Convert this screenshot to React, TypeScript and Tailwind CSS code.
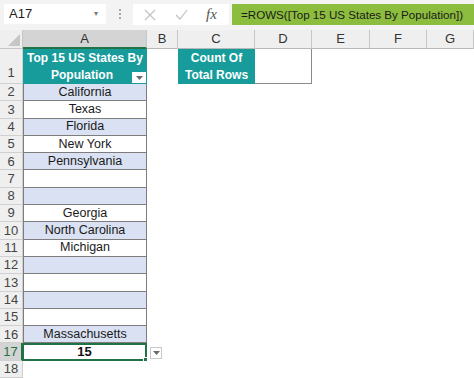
const cols = ["A", "B", "C", "D", "E", "F", "G"]
const widths = ["w-[124px]", "w-[31px]", "w-[77px]", "w-[57px]", "w-[58px]", "w-[57px]", "w-[47px]"]

const states = [
  "California",
  "Texas",
  "Florida",
  "New York",
  "Pennsylvania",
  "",
  "",
  "Georgia",
  "North Carolina",
  "Michigan",
  "",
  "",
  "",
  "",
  "Massachusetts",
]

function Caret() {
  return (
    <svg width="7" height="4" viewBox="0 0 7 4" className="block">
      <path d="M0 0 L7 0 L3.5 4 Z" fill="#6b6b6b" />
    </svg>
  )
}

function FormulaBar() {
  return (
    <div className="flex h-[30px] items-start bg-[#f3f3f3] pt-[4px]">
      {/* name box */}
      <div className="ml-[4px] flex h-[20px] w-[102px] items-center justify-between bg-white pl-[5px] pr-[8px] text-[13px] text-[#222]">
        <span>A17</span>
        <span className="text-[8px] text-[#777]">▾</span>
      </div>
      <div className="flex w-[27px] flex-col items-center justify-center gap-[2px] pt-[5px]">
        <span className="h-[2px] w-[2px] bg-[#aaa]" />
        <span className="h-[2px] w-[2px] bg-[#aaa]" />
        <span className="h-[2px] w-[2px] bg-[#aaa]" />
      </div>
      <div className="flex h-[21px] w-[96px] items-center bg-white">
        <svg width="12" height="12" viewBox="0 0 12 12" className="ml-[11px]">
          <path d="M1 1 L11 11 M11 1 L1 11" stroke="#c2c2c2" strokeWidth="1.2" />
        </svg>
        <svg width="13" height="11" viewBox="0 0 13 11" className="ml-[19px]">
          <path d="M1 6 L5 10 L12 1" stroke="#c2c2c2" strokeWidth="1.2" fill="none" />
        </svg>
        <span className="ml-[18px] font-['Liberation_Serif'] text-[15px] italic text-[#555]">fx</span>
      </div>
      <div className="ml-[3px] flex h-[21px] min-w-0 flex-1 items-center overflow-hidden whitespace-nowrap bg-[#8cbd3e] pl-[9px] text-[11.6px] text-[#1a1a1a]">
        =ROWS([Top 15 US States By Population])
      </div>
    </div>
  )
}

function HeaderRow() {
  return (
    <div className="flex h-[19px] bg-[#efefef] text-[13px] text-[#333]">
      <div className="relative w-[23px] border-r border-b border-[#c6c6c6]">
        <svg width="12" height="12" viewBox="0 0 12 12" className="absolute bottom-[2px] right-[2px]">
          <path d="M12 0 L12 12 L0 12 Z" fill="#c6c6c6" />
        </svg>
      </div>
      {cols.map((c, i) => (
        <div
          key={c}
          className={`${widths[i]} flex items-center justify-center border-r border-[#c6c6c6] ${
            i === 0 ? "border-b-2 border-b-[#217346] bg-[#d4d4d4]" : "border-b border-b-[#b8b8b8]"
          }`}
        >
          {c}
        </div>
      ))}
    </div>
  )
}

function RowNum({ n, tall, active }: { n: number; tall?: boolean; active?: boolean }) {
  return (
    <div
      className={`flex w-[23px] shrink-0 justify-center border-r border-b border-[#d0d0d0] text-[13px] ${
        tall ? "items-end pb-[1px]" : "items-center"
      } ${active ? "border-r-2 border-r-[#217346] bg-[#d4d4d4] text-[#217346]" : "bg-[#efefef] text-[#444]"}`}
    >
      {n}
    </div>
  )
}

export default function App() {
  return (
    <div className="h-[378px] w-[474px] overflow-hidden bg-white font-['Liberation_Sans',sans-serif]">
      <FormulaBar />
      <HeaderRow />

      {/* Row 1 */}
      <div className="flex h-[35px]">
        <RowNum n={1} tall />
        <div className="relative flex w-[124px] flex-col items-center justify-center bg-[#179c9b] text-[12px] font-bold leading-[17px] text-white">
          <span>Top 15 US States By</span>
          <span className="pr-[6px]">Population</span>
          <div className="absolute bottom-[1px] right-[1px] flex h-[11px] w-[14px] items-center justify-center bg-white">
            <Caret />
          </div>
        </div>
        <div className="w-[31px]" />
        <div className="flex w-[77px] flex-col items-center justify-center bg-[#179c9b] text-[12px] font-bold leading-[17px] text-white">
          <span>Count Of</span>
          <span>Total Rows</span>
        </div>
        <div className="w-[57px] border-r border-b border-[#8a8a8a]" />
      </div>

      {/* Rows 2-16 */}
      {states.map((s, i) => (
        <div key={i} className="flex h-[17.3px]">
          <RowNum n={i + 2} />
          <div
            className={`flex w-[124px] items-center justify-center border-x border-b border-[#7d7d7d] text-[12.5px] text-[#1a1a1a] ${
              i % 2 === 0 ? "bg-[#d9e1f2]" : "bg-white"
            }`}
          >
            {s}
          </div>
        </div>
      ))}

      {/* Row 17 total */}
      <div className="flex h-[17.3px]">
        <RowNum n={17} active />
        <div className="relative -ml-[1px] flex w-[125px] items-center justify-center border-2 border-[#217346] text-[13px] font-bold text-[#111]">
          15
          <span className="absolute -bottom-[3px] -right-[3px] h-[5px] w-[5px] border border-white bg-[#217346]" />
        </div>
        <div className="ml-[3px] mt-[4px] flex h-[12px] w-[12px] items-center justify-center border border-[#c8c8c8] bg-white">
          <Caret />
        </div>
      </div>

      {/* Row 18 */}
      <div className="flex h-[17.3px]">
        <RowNum n={18} />
      </div>
    </div>
  )
}
